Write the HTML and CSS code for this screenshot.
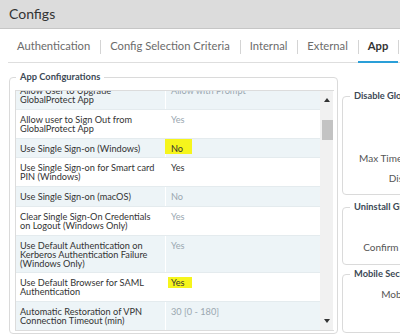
FILE: index.html
```html
<!DOCTYPE html>
<html>
<head>
<meta charset="utf-8">
<link rel="stylesheet" href="styles.css">
</head>
<body>
<div class="page">
  <div class="header">Configs</div>
  <div class="tabs">
    <div class="tab">Authentication</div>
    <div class="tab">Config Selection Criteria</div>
    <div class="tab">Internal</div>
    <div class="tab">External</div>
    <div class="tab active">App</div>
    <div class="tab"></div>
  </div>
  <div class="content">
    <fieldset class="box main">
      <legend>App Configurations</legend>
      <div class="grid-wrap">
        <div class="viewport">
          <div class="rows">
            <div class="row alt"><div class="k">Allow User to Upgrade GlobalProtect App</div><div class="v muted">Allow with Prompt</div></div>
            <div class="row"><div class="k">Allow user to Sign Out from GlobalProtect App</div><div class="v muted">Yes</div></div>
            <div class="row alt"><div class="k">Use Single Sign-on (Windows)</div><div class="v"><span class="mark mark-a">No</span></div></div>
            <div class="row"><div class="k">Use Single Sign-on for Smart card PIN (Windows)</div><div class="v">Yes</div></div>
            <div class="row alt"><div class="k">Use Single Sign-on (macOS)</div><div class="v muted">No</div></div>
            <div class="row"><div class="k">Clear Single Sign-On Credentials on Logout (Windows Only)</div><div class="v muted">Yes</div></div>
            <div class="row alt"><div class="k">Use Default Authentication on Kerberos Authentication Failure (Windows Only)</div><div class="v muted">Yes</div></div>
            <div class="row"><div class="k">Use Default Browser for SAML Authentication</div><div class="v"><span class="mark mark-b">Yes</span></div></div>
            <div class="row alt"><div class="k">Automatic Restoration of VPN Connection Timeout (min)</div><div class="v muted">30 [0 - 180]</div></div>
          </div>
        </div>
        <div class="scrollbar">
          <div class="arrow up"></div>
          <div class="thumb"></div>
          <div class="spacer"></div>
          <div class="arrow down"></div>
        </div>
      </div>
    </fieldset>
    <div class="side">
      <fieldset class="box sub s1">
        <legend>Disable GlobalProtect App</legend>
        <div class="f">Passcode</div>
        <div class="f">Confirm Passcode</div>
        <div class="f">Max Times User Can Disable</div>
        <div class="f">Disable Timeout (min)</div>
      </fieldset>
      <fieldset class="box sub s2">
        <legend>Uninstall GlobalProtect App</legend>
        <div class="f tall">Uninstall Password</div>
        <div class="f tall">Confirm Uninstall Password</div>
      </fieldset>
      <fieldset class="box sub s3">
        <legend>Mobile Security Manager Settings</legend>
        <div class="f">Mobile Security Manager</div>
        <div class="f tall">Enrollment Port</div>
      </fieldset>
    </div>
  </div>
</div>
</body>
</html>
```
FILE: styles.css
```css
* { box-sizing: border-box; }
html, body { margin: 0; padding: 0; }
body {
  width: 400px;
  height: 335px;
  overflow: hidden;
  background: #fff;
  font-family: Lato, "Open Sans", sans-serif;
  color: #333;
}
.page { width: 400px; height: 335px; overflow: hidden; }
.header {
  height: 29px;
  background: #dcdcdc;
  border-bottom: 1px solid #c6c6c6;
  font-size: 14px;
  line-height: 27px;
  padding-left: 9px;
  color: #333;
}
.tabs {
  display: flex;
  margin-left: 8px;
  height: 34px;
  border-bottom: 1px solid #dedede;
  align-items: stretch;
  white-space: nowrap;
}
.tab {
  font-size: 11.2px;
  color: #6b6b6b;
  padding: 0 10px;
  display: flex;
  align-items: center;
  position: relative;
}
.tab:first-child { padding-left: 9px; }
.tab + .tab::before {
  content: "";
  position: absolute;
  left: 0;
  top: 11px;
  height: 14px;
  border-left: 1px solid #d4d4d4;
}
.tab.active {
  font-weight: 700;
  color: #333;
  border-bottom: 2px solid #2a9fd8;
  margin-bottom: -1px;
}
.content {
  display: flex;
  align-items: flex-start;
  padding-left: 9px;
  margin-top: 8px;
}
.box {
  margin: 0;
  border: 1px solid #dadada;
  border-radius: 4px;
  min-width: 0;
}
.box legend {
  font-size: 9.3px;
  font-weight: 700;
  color: #3d4a56;
  line-height: 12px;
  padding: 0 4px;
}
.main {
  width: 329px;
  flex: none;
  padding: 7px 3px 2px 5px;
}
.main legend { margin-left: 1px; }
.grid-wrap {
  display: flex;
  border: 1px solid #dcdcdc;
  border-right: 0;
  height: 241px;
}
.viewport {
  width: 304px;
  overflow: hidden;
  height: 100%;
}
.rows { margin-top: -10px; }
.row {
  display: flex;
  border-bottom: 1px solid #e4ebee;
  font-size: 9.2px;
  line-height: 9px;
}
.row.alt { background: #edf4f7; }
.k {
  width: 150px;
  flex: none;
  padding: 5px 6px 4.75px 4px;
  border-right: 1px solid #fff;
  color: #333;
}
.v {
  flex: 1;
  padding: 5px 4px 4.75px 5px;
  color: #333;
}
.v.muted, .muted { color: #9aa7b0; }
.mark { background: #f6f51c; color: #333; }
.mark-a { margin-left: -6px; padding: 4px 9px 0 6px; }
.mark-b { margin-left: -3px; padding: 0 7px 0 3px; }
.scrollbar {
  width: 13px;
  flex: none;
  background: #f1f1f1;
  display: flex;
  flex-direction: column;
  align-items: center;
}
.arrow {
  width: 0;
  height: 0;
  border-left: 3px solid transparent;
  border-right: 3px solid transparent;
}
.arrow.up { border-bottom: 4px solid #333; margin-top: 7px; }
.arrow.down { border-top: 4px solid #333; margin-bottom: 7px; }
.thumb {
  width: 11px;
  height: 20px;
  background: #c3c3c3;
  margin-top: 18px;
  align-self: flex-end;
}
.spacer { flex: 1; }
.side {
  margin-left: 4px;
  margin-top: 19px;
  width: 180px;
  flex: none;
  display: flex;
  flex-direction: column;
}
.sub {
  padding: 6px 0 6px 7px;
  width: 180px;
}
.s2 { margin-top: 6px; padding-top: 1px; }
.s3 { margin-top: 3px; padding-top: 4px; }
.f {
  font-size: 10px;
  color: #555;
  height: 20px;
  line-height: 20px;
  width: 134px;
  text-align: right;
  white-space: nowrap;
}
.f.tall { height: 22px; line-height: 22px; }
.s3 .f { width: 141px; }
```
